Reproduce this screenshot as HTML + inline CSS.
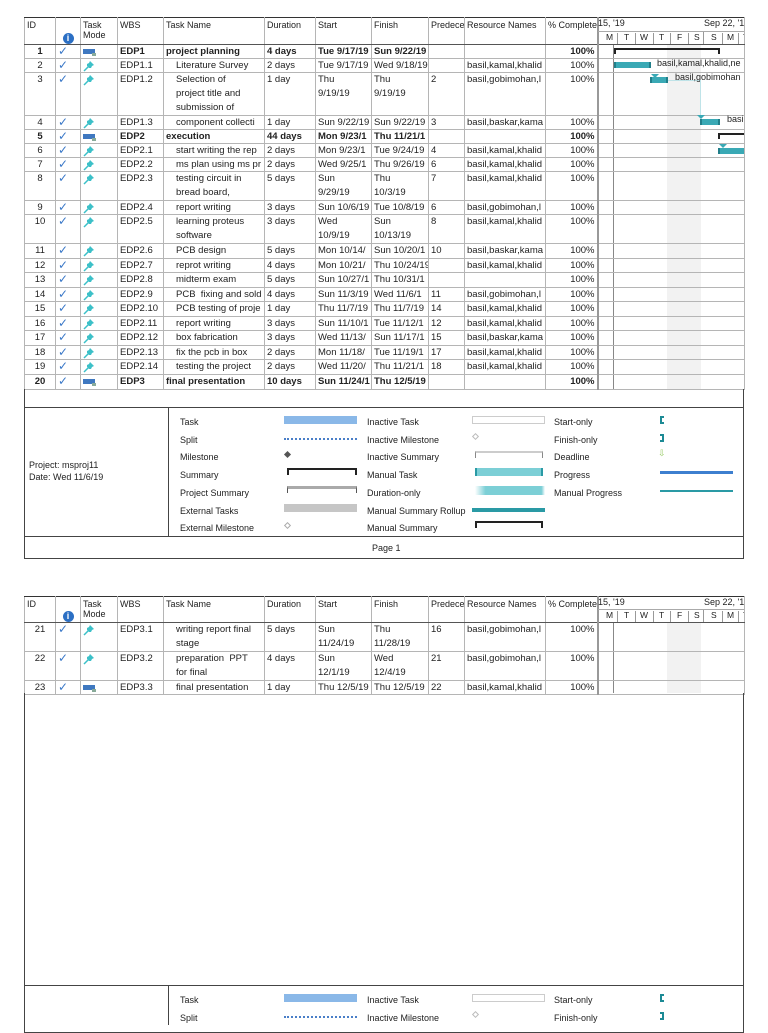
<!DOCTYPE html>
<html><head><meta charset="utf-8"><style>
*{margin:0;padding:0;box-sizing:border-box}
body{width:768px;height:1024px;background:#fff;position:relative;overflow:hidden;font-family:"Liberation Sans Narrow","Liberation Sans",sans-serif;font-size:9.5px;color:#222}
.a{position:absolute}
table{position:absolute;left:24px;border-collapse:collapse;table-layout:fixed;width:720px}
td{border:1px solid #b5b5b5;vertical-align:top;padding:0 2px;line-height:13px;white-space:nowrap;overflow:hidden}
td svg{display:block;margin-top:1px}
tr.h td{border-top:1.5px solid #333;border-bottom:1.5px solid #555;line-height:10px;padding-top:2px;font-size:9px}
td.c{text-align:center}
td.r{text-align:right}
td.ch{border-left:2px solid #999}
b{font-weight:bold}
.ind{padding-left:12px}
.ck{color:#3a78c8;font-size:12px;line-height:13px}
.box{position:absolute;border:1px solid #444}
.bar{position:absolute;background:#3aa9b5;border-left:2px solid #217f8a;border-right:2px solid #217f8a;height:6px}
.lg{position:absolute;font-size:9px}
.sm{display:block;width:12px;height:5px;background:#3f78c0;position:relative;margin-top:4px}
.sm:after{content:"";position:absolute;left:9px;top:4px;width:4px;height:3px;background:#8a9;}
</style></head><body>

<svg width="0" height="0" style="position:absolute"><defs><g id="pin"><path d="M7 1 L11 5 L9 6 L8 8 L6 8 L4 6 L4 4 L6 3 Z" fill="#3cc0c8"/><path d="M5 7 L1 11" stroke="#3cc0c8" stroke-width="1.5"/></g></defs></svg>

<div class="a" style="left:667px;top:44px;width:34px;height:345px;background:#f2f2f2"></div>
<div class="a" style="left:613px;top:44px;width:1px;height:345px;background:#888"></div>

<table style="top:17px">
<colgroup><col style="width:31px"><col style="width:25px"><col style="width:37px"><col style="width:46px"><col style="width:101px"><col style="width:51px"><col style="width:56px"><col style="width:57px"><col style="width:36px"><col style="width:81px"><col style="width:52px"><col style="width:147px"></colgroup>
<tr class="h" style="height:27px"><td>ID</td><td class="c" style="vertical-align:bottom"><span style="display:inline-block;width:11px;height:11px;border-radius:50%;background:#2b6fc4;color:#fff;font-size:9px;line-height:11px;font-weight:bold">i</span></td><td>Task<br>Mode</td><td>WBS</td><td>Task Name</td><td>Duration</td><td>Start</td><td>Finish</td><td>Predeces</td><td>Resource Names</td><td>% Complete</td><td class="ch"></td></tr>
<tr style="height:14px"><td class="c"><b>1</b></td><td class="ck">✓</td><td><span class="sm"></span></td><td><b>EDP1</b></td><td><b>project planning</b></td><td><b>4 days</b></td><td><b>Tue 9/17/19</b></td><td><b>Sun 9/22/19</b></td><td></td><td></td><td class="r"><b>100%</b></td><td class="ch"></td></tr>
<tr style="height:14px"><td class="c">2</td><td class="ck">✓</td><td><svg width="12" height="12"><use href="#pin"/></svg></td><td>EDP1.1</td><td class="ind">Literature Survey</td><td>2 days</td><td>Tue 9/17/19</td><td>Wed 9/18/19</td><td></td><td>basil,kamal,khalid</td><td class="r">100%</td><td class="ch"></td></tr>
<tr style="height:43px"><td class="c">3</td><td class="ck">✓</td><td><svg width="12" height="12"><use href="#pin"/></svg></td><td>EDP1.2</td><td class="ind" style="line-height:14px">Selection of<br>project title and<br>submission of</td><td>1 day</td><td style="line-height:14px">Thu<br>9/19/19</td><td style="line-height:14px">Thu<br>9/19/19</td><td>2</td><td>basil,gobimohan,l</td><td class="r">100%</td><td class="ch"></td></tr>
<tr style="height:14px"><td class="c">4</td><td class="ck">✓</td><td><svg width="12" height="12"><use href="#pin"/></svg></td><td>EDP1.3</td><td class="ind">component collecti</td><td>1 day</td><td>Sun 9/22/19</td><td>Sun 9/22/19</td><td>3</td><td>basil,baskar,kama</td><td class="r">100%</td><td class="ch"></td></tr>
<tr style="height:14px"><td class="c"><b>5</b></td><td class="ck">✓</td><td><span class="sm"></span></td><td><b>EDP2</b></td><td><b>execution</b></td><td><b>44 days</b></td><td><b>Mon 9/23/1</b></td><td><b>Thu 11/21/1</b></td><td></td><td></td><td class="r"><b>100%</b></td><td class="ch"></td></tr>
<tr style="height:14px"><td class="c">6</td><td class="ck">✓</td><td><svg width="12" height="12"><use href="#pin"/></svg></td><td>EDP2.1</td><td class="ind">start writing the rep</td><td>2 days</td><td>Mon 9/23/1</td><td>Tue 9/24/19</td><td>4</td><td>basil,kamal,khalid</td><td class="r">100%</td><td class="ch"></td></tr>
<tr style="height:14px"><td class="c">7</td><td class="ck">✓</td><td><svg width="12" height="12"><use href="#pin"/></svg></td><td>EDP2.2</td><td class="ind">ms plan using ms pr</td><td>2 days</td><td>Wed 9/25/1</td><td>Thu 9/26/19</td><td>6</td><td>basil,kamal,khalid</td><td class="r">100%</td><td class="ch"></td></tr>
<tr style="height:29px"><td class="c">8</td><td class="ck">✓</td><td><svg width="12" height="12"><use href="#pin"/></svg></td><td>EDP2.3</td><td class="ind" style="line-height:14px">testing circuit in<br>bread board,</td><td>5 days</td><td style="line-height:14px">Sun<br>9/29/19</td><td style="line-height:14px">Thu<br>10/3/19</td><td>7</td><td>basil,kamal,khalid</td><td class="r">100%</td><td class="ch"></td></tr>
<tr style="height:14px"><td class="c">9</td><td class="ck">✓</td><td><svg width="12" height="12"><use href="#pin"/></svg></td><td>EDP2.4</td><td class="ind">report writing</td><td>3 days</td><td>Sun 10/6/19</td><td>Tue 10/8/19</td><td>6</td><td>basil,gobimohan,l</td><td class="r">100%</td><td class="ch"></td></tr>
<tr style="height:29px"><td class="c">10</td><td class="ck">✓</td><td><svg width="12" height="12"><use href="#pin"/></svg></td><td>EDP2.5</td><td class="ind" style="line-height:14px">learning proteus<br>software</td><td>3 days</td><td style="line-height:14px">Wed<br>10/9/19</td><td style="line-height:14px">Sun<br>10/13/19</td><td>8</td><td>basil,kamal,khalid</td><td class="r">100%</td><td class="ch"></td></tr>
<tr style="height:15px"><td class="c">11</td><td class="ck">✓</td><td><svg width="12" height="12"><use href="#pin"/></svg></td><td>EDP2.6</td><td class="ind">PCB design</td><td>5 days</td><td>Mon 10/14/</td><td>Sun 10/20/1</td><td>10</td><td>basil,baskar,kama</td><td class="r">100%</td><td class="ch"></td></tr>
<tr style="height:14px"><td class="c">12</td><td class="ck">✓</td><td><svg width="12" height="12"><use href="#pin"/></svg></td><td>EDP2.7</td><td class="ind">reprot writing</td><td>4 days</td><td>Mon 10/21/</td><td>Thu 10/24/19</td><td></td><td>basil,kamal,khalid</td><td class="r">100%</td><td class="ch"></td></tr>
<tr style="height:15px"><td class="c">13</td><td class="ck">✓</td><td><svg width="12" height="12"><use href="#pin"/></svg></td><td>EDP2.8</td><td class="ind">midterm exam</td><td>5 days</td><td>Sun 10/27/1</td><td>Thu 10/31/1</td><td></td><td></td><td class="r">100%</td><td class="ch"></td></tr>
<tr style="height:14px"><td class="c">14</td><td class="ck">✓</td><td><svg width="12" height="12"><use href="#pin"/></svg></td><td>EDP2.9</td><td class="ind">PCB &nbsp;fixing and sold</td><td>4 days</td><td>Sun 11/3/19</td><td>Wed 11/6/1</td><td>11</td><td>basil,gobimohan,l</td><td class="r">100%</td><td class="ch"></td></tr>
<tr style="height:15px"><td class="c">15</td><td class="ck">✓</td><td><svg width="12" height="12"><use href="#pin"/></svg></td><td>EDP2.10</td><td class="ind">PCB testing of proje</td><td>1 day</td><td>Thu 11/7/19</td><td>Thu 11/7/19</td><td>14</td><td>basil,kamal,khalid</td><td class="r">100%</td><td class="ch"></td></tr>
<tr style="height:14px"><td class="c">16</td><td class="ck">✓</td><td><svg width="12" height="12"><use href="#pin"/></svg></td><td>EDP2.11</td><td class="ind">report writing</td><td>3 days</td><td>Sun 11/10/1</td><td>Tue 11/12/1</td><td>12</td><td>basil,kamal,khalid</td><td class="r">100%</td><td class="ch"></td></tr>
<tr style="height:15px"><td class="c">17</td><td class="ck">✓</td><td><svg width="12" height="12"><use href="#pin"/></svg></td><td>EDP2.12</td><td class="ind">box fabrication</td><td>3 days</td><td>Wed 11/13/</td><td>Sun 11/17/1</td><td>15</td><td>basil,baskar,kama</td><td class="r">100%</td><td class="ch"></td></tr>
<tr style="height:14px"><td class="c">18</td><td class="ck">✓</td><td><svg width="12" height="12"><use href="#pin"/></svg></td><td>EDP2.13</td><td class="ind">fix the pcb in box</td><td>2 days</td><td>Mon 11/18/</td><td>Tue 11/19/1</td><td>17</td><td>basil,kamal,khalid</td><td class="r">100%</td><td class="ch"></td></tr>
<tr style="height:15px"><td class="c">19</td><td class="ck">✓</td><td><svg width="12" height="12"><use href="#pin"/></svg></td><td>EDP2.14</td><td class="ind">testing the project</td><td>2 days</td><td>Wed 11/20/</td><td>Thu 11/21/1</td><td>18</td><td>basil,kamal,khalid</td><td class="r">100%</td><td class="ch"></td></tr>
<tr style="height:15px"><td class="c"><b>20</b></td><td class="ck">✓</td><td><span class="sm"></span></td><td><b>EDP3</b></td><td><b>final presentation</b></td><td><b>10 days</b></td><td><b>Sun 11/24/1</b></td><td><b>Thu 12/5/19</b></td><td></td><td></td><td class="r"><b>100%</b></td><td class="ch"></td></tr>
</table>

<div class="a" style="left:598px;top:18px;font-size:9px">15, '19</div>
<div class="a" style="left:704px;top:18px;font-size:9px;width:40px;overflow:hidden;white-space:nowrap">Sep 22, '19</div>
<div class="a" style="left:598px;top:31px;width:146px;height:13px;border-top:1px solid #aaa;font-size:8.5px;overflow:hidden;white-space:nowrap">
<span class="a" style="left:8px">M</span><span class="a" style="left:26px">T</span><span class="a" style="left:42px">W</span><span class="a" style="left:61px">T</span><span class="a" style="left:79px">F</span><span class="a" style="left:96px">S</span><span class="a" style="left:113px">S</span><span class="a" style="left:129px">M</span><span class="a" style="left:145px">T</span>
<i class="a" style="left:19px;top:1px;width:1px;height:11px;background:#999"></i><i class="a" style="left:37px;top:1px;width:1px;height:11px;background:#999"></i><i class="a" style="left:55px;top:1px;width:1px;height:11px;background:#999"></i><i class="a" style="left:72px;top:1px;width:1px;height:11px;background:#999"></i><i class="a" style="left:90px;top:1px;width:1px;height:11px;background:#999"></i><i class="a" style="left:105px;top:-13px;width:1px;height:25px;background:#999"></i><i class="a" style="left:124px;top:1px;width:1px;height:11px;background:#999"></i><i class="a" style="left:140px;top:1px;width:1px;height:11px;background:#999"></i>
</div>
<div class="a" style="left:614px;top:48px;width:106px;height:2px;background:#222"></div>
<div class="a" style="left:614px;top:48px;width:2px;height:6px;background:#222"></div>
<div class="a" style="left:718px;top:48px;width:2px;height:6px;background:#222"></div>
<div class="bar" style="left:614px;top:62px;width:37px"></div>
<div class="a" style="left:657px;top:58px;font-size:9px;white-space:nowrap;width:87px;overflow:hidden">basil,kamal,khalid,ne</div>
<div class="a" style="left:651px;top:74px;width:0;height:0;border-left:4px solid transparent;border-right:4px solid transparent;border-top:4px solid #3aa9b5"></div>
<div class="bar" style="left:650px;top:77px;width:18px"></div>
<div class="a" style="left:668px;top:80px;width:32px;height:1px;background:#bfe3e8"></div>
<div class="a" style="left:675px;top:72px;font-size:9px;white-space:nowrap;width:69px;overflow:hidden">basil,gobimohan</div>
<div class="a" style="left:700px;top:80px;width:1px;height:36px;background:#bfe3e8"></div>
<div class="a" style="left:697px;top:115px;width:0;height:0;border-left:4px solid transparent;border-right:4px solid transparent;border-top:4px solid #3aa9b5"></div>
<div class="bar" style="left:700px;top:119px;width:20px"></div>
<div class="a" style="left:727px;top:114px;font-size:9px;width:17px;overflow:hidden">basil</div>
<div class="a" style="left:718px;top:133px;width:26px;height:2px;background:#222"></div>
<div class="a" style="left:718px;top:133px;width:2px;height:6px;background:#222"></div>
<div class="a" style="left:719px;top:144px;width:0;height:0;border-left:4px solid transparent;border-right:4px solid transparent;border-top:4px solid #3aa9b5"></div>
<div class="bar" style="left:718px;top:148px;width:26px;border-right:none"></div>

<div class="box" style="left:24px;top:389px;width:720px;height:170px;border-top:none"></div>
<div class="a" style="left:24px;top:407px;width:720px;height:1px;background:#444"></div>
<div class="a" style="left:24px;top:536px;width:720px;height:1px;background:#444"></div>
<div class="a" style="left:168px;top:407px;width:1px;height:129px;background:#444"></div>
<div class="lg" style="left:29px;top:459px;line-height:12px">Project: msproj11<br>Date: Wed 11/6/19</div>
<div class="lg" style="left:372px;top:543px">Page 1</div>

<div class="lg" style="left:180px;top:414px;line-height:17.7px">Task<br>Split<br>Milestone<br>Summary<br>Project Summary<br>External Tasks<br>External Milestone</div>
<div class="lg" style="left:367px;top:414px;line-height:17.7px">Inactive Task<br>Inactive Milestone<br>Inactive Summary<br>Manual Task<br>Duration-only<br>Manual Summary Rollup<br>Manual Summary</div>
<div class="lg" style="left:554px;top:414px;line-height:17.7px">Start-only<br>Finish-only<br>Deadline<br>Progress<br>Manual Progress</div>
<div class="a" style="left:284px;top:416px;width:73px;height:8px;background:#8ab8e8"></div>
<div class="a" style="left:284px;top:437px;width:73px;height:3px;border-bottom:2px dotted #4a7fc8"></div>
<div class="a" style="left:285px;top:452px;width:5px;height:5px;background:#555;transform:rotate(45deg)"></div>
<div class="a" style="left:287px;top:468px;width:70px;height:7px;border:2px solid #222;border-bottom:none"></div>
<div class="a" style="left:287px;top:486px;width:70px;height:7px;border:1px solid #555;border-top:3px solid #aaa;border-bottom:none"></div>
<div class="a" style="left:284px;top:504px;width:73px;height:8px;background:#c6c6c6"></div>
<div class="a" style="left:285px;top:523px;width:5px;height:5px;border:1px solid #aaa;transform:rotate(45deg)"></div>
<div class="a" style="left:472px;top:416px;width:73px;height:8px;border:1px solid #ccc"></div>
<div class="a" style="left:473px;top:434px;width:5px;height:5px;border:1px solid #bbb;transform:rotate(45deg)"></div>
<div class="a" style="left:475px;top:451px;width:68px;height:7px;border:1px solid #888;border-top:2px solid #ccc;border-bottom:none"></div>
<div class="a" style="left:475px;top:468px;width:68px;height:8px;background:#7ccfd6;border-left:2px solid #2a9aa5;border-right:2px solid #2a9aa5"></div>
<div class="a" style="left:475px;top:486px;width:70px;height:9px;background:linear-gradient(90deg,#fff,#7ccfd6 15%,#7ccfd6 95%,#fff)"></div>
<div class="a" style="left:472px;top:508px;width:73px;height:4px;background:#2a9aa5"></div>
<div class="a" style="left:475px;top:521px;width:68px;height:7px;border:2px solid #222;border-bottom:none"></div>
<div class="a" style="left:660px;top:416px;width:4px;height:8px;border:2px solid #1c8a95;border-right:none"></div>
<div class="a" style="left:660px;top:434px;width:4px;height:8px;border:2px solid #1c8a95;border-left:none"></div>
<div class="a" style="left:658px;top:448px;font-size:9px;color:#9c6">⇩</div>
<div class="a" style="left:660px;top:471px;width:73px;height:3px;background:#3d7fcf"></div>
<div class="a" style="left:660px;top:490px;width:73px;height:2px;background:#2a9aa5"></div>

<!-- PAGE 2 -->
<div class="a" style="left:667px;top:622px;width:34px;height:71px;background:#f2f2f2"></div>
<div class="a" style="left:613px;top:622px;width:1px;height:71px;background:#888"></div>
<table style="top:596px">
<colgroup><col style="width:31px"><col style="width:25px"><col style="width:37px"><col style="width:46px"><col style="width:101px"><col style="width:51px"><col style="width:56px"><col style="width:57px"><col style="width:36px"><col style="width:81px"><col style="width:52px"><col style="width:147px"></colgroup>
<tr class="h" style="height:26px"><td>ID</td><td class="c" style="vertical-align:bottom"><span style="display:inline-block;width:11px;height:11px;border-radius:50%;background:#2b6fc4;color:#fff;font-size:9px;line-height:11px;font-weight:bold">i</span></td><td>Task<br>Mode</td><td>WBS</td><td>Task Name</td><td>Duration</td><td>Start</td><td>Finish</td><td>Predeces</td><td>Resource Names</td><td>% Complete</td><td class="ch"></td></tr>
<tr style="height:29px"><td class="c">21</td><td class="ck">✓</td><td><svg width="12" height="12"><use href="#pin"/></svg></td><td>EDP3.1</td><td class="ind" style="line-height:14px">writing report final<br>stage</td><td>5 days</td><td style="line-height:14px">Sun<br>11/24/19</td><td style="line-height:14px">Thu<br>11/28/19</td><td>16</td><td>basil,gobimohan,l</td><td class="r">100%</td><td class="ch"></td></tr>
<tr style="height:28px"><td class="c">22</td><td class="ck">✓</td><td><svg width="12" height="12"><use href="#pin"/></svg></td><td>EDP3.2</td><td class="ind" style="line-height:14px">preparation &nbsp;PPT<br>for final</td><td>4 days</td><td style="line-height:14px">Sun<br>12/1/19</td><td style="line-height:14px">Wed<br>12/4/19</td><td>21</td><td>basil,gobimohan,l</td><td class="r">100%</td><td class="ch"></td></tr>
<tr style="height:14px"><td class="c">23</td><td class="ck">✓</td><td><span class="sm"></span></td><td>EDP3.3</td><td class="ind">final presentation</td><td>1 day</td><td>Thu 12/5/19</td><td>Thu 12/5/19</td><td>22</td><td>basil,kamal,khalid</td><td class="r">100%</td><td class="ch"></td></tr>
</table>
<div class="a" style="left:598px;top:597px;font-size:9px">15, '19</div>
<div class="a" style="left:704px;top:597px;font-size:9px;width:40px;overflow:hidden;white-space:nowrap">Sep 22, '19</div>
<div class="a" style="left:598px;top:609px;width:146px;height:13px;border-top:1px solid #aaa;font-size:8.5px;overflow:hidden;white-space:nowrap">
<span class="a" style="left:8px">M</span><span class="a" style="left:26px">T</span><span class="a" style="left:42px">W</span><span class="a" style="left:61px">T</span><span class="a" style="left:79px">F</span><span class="a" style="left:96px">S</span><span class="a" style="left:113px">S</span><span class="a" style="left:129px">M</span><span class="a" style="left:145px">T</span>
<i class="a" style="left:19px;top:1px;width:1px;height:11px;background:#999"></i><i class="a" style="left:37px;top:1px;width:1px;height:11px;background:#999"></i><i class="a" style="left:55px;top:1px;width:1px;height:11px;background:#999"></i><i class="a" style="left:72px;top:1px;width:1px;height:11px;background:#999"></i><i class="a" style="left:90px;top:1px;width:1px;height:11px;background:#999"></i><i class="a" style="left:105px;top:-13px;width:1px;height:25px;background:#999"></i><i class="a" style="left:124px;top:1px;width:1px;height:11px;background:#999"></i><i class="a" style="left:140px;top:1px;width:1px;height:11px;background:#999"></i>
</div>
<div class="box" style="left:24px;top:693px;width:720px;height:340px;border-top:none"></div>
<div class="a" style="left:24px;top:985px;width:720px;height:1px;background:#444"></div>
<div class="a" style="left:168px;top:985px;width:1px;height:40px;background:#444"></div>
<div class="lg" style="left:180px;top:992px;line-height:17.7px">Task<br>Split</div>
<div class="lg" style="left:367px;top:992px;line-height:17.7px">Inactive Task<br>Inactive Milestone</div>
<div class="lg" style="left:554px;top:992px;line-height:17.7px">Start-only<br>Finish-only</div>
<div class="a" style="left:284px;top:994px;width:73px;height:8px;background:#8ab8e8"></div>
<div class="a" style="left:284px;top:1015px;width:73px;height:3px;border-bottom:2px dotted #4a7fc8"></div>
<div class="a" style="left:472px;top:994px;width:73px;height:8px;border:1px solid #ccc"></div>
<div class="a" style="left:473px;top:1012px;width:5px;height:5px;border:1px solid #bbb;transform:rotate(45deg)"></div>
<div class="a" style="left:660px;top:994px;width:4px;height:8px;border:2px solid #1c8a95;border-right:none"></div>
<div class="a" style="left:660px;top:1012px;width:4px;height:8px;border:2px solid #1c8a95;border-left:none"></div>
</body></html>
